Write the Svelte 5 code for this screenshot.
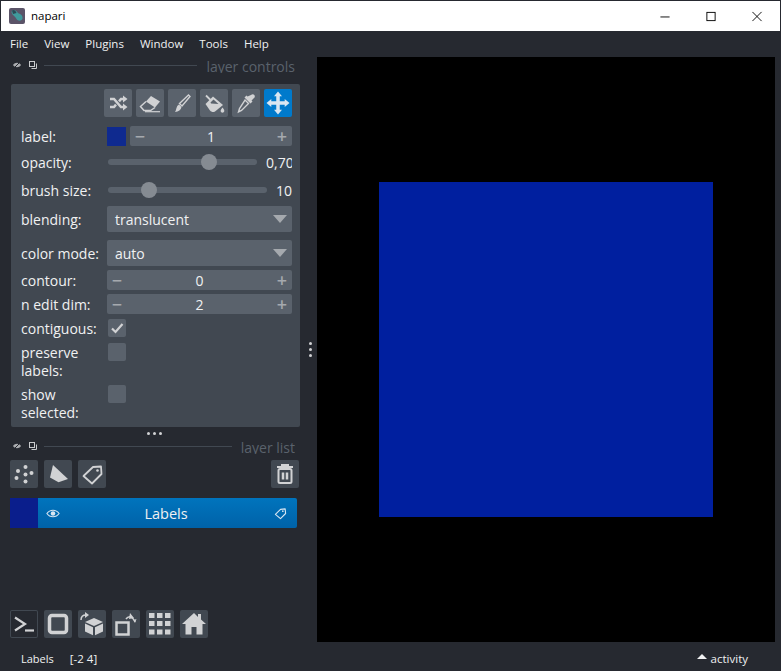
<script>
  const menus = ['File', 'View', 'Plugins', 'Window', 'Tools', 'Help'];
</script>

<div class="window">
  <header class="titlebar">
    <svg class="appicon" viewBox="0 0 16 16">
      <rect width="16" height="16" rx="2" fill="#5b5468" />
      <path d="M3 2.5 C5 1 8 3 9 5 C11 6 14 7 13.5 10.5 C13 13 9 13.5 7.5 11 C6.5 8.5 3 7 2.5 4.5Z" fill="#3f9a9c" />
      <path d="M3 2.5 C5 1 7 3 7.5 5 L4 6 Z" fill="#2a4a55" />
    </svg>
    <span class="title">napari</span>
    <div class="winbtns">
      <svg viewBox="0 0 12 12"><path d="M1 6.5h10" stroke="#000" stroke-width="1" /></svg>
      <svg viewBox="0 0 12 12"><rect x="1.5" y="1.5" width="9" height="9" fill="none" stroke="#000" /></svg>
      <svg viewBox="0 0 12 12"><path d="M1 1l10 10M11 1L1 11" stroke="#000" stroke-width="1" /></svg>
    </div>
  </header>

  <nav class="menubar">
    {#each menus as m}<span>{m}</span>{/each}
  </nav>

  <div class="main">
    <aside class="dock">
      <div class="dockhead controls">
        <svg class="mini" viewBox="0 0 8 8"><path d="M0 4c2-3 6-3 8 0-2 3-6 3-8 0z" fill="#a9abae" /><path d="M1 7L7 1" stroke="#262930" /></svg>
        <svg class="mini gap" viewBox="0 0 8 8"><rect x="0.5" y="0.5" width="5" height="5" fill="none" stroke="#c8cacc" /><path d="M2.5 7.5h5v-5" fill="none" stroke="#c8cacc" /></svg>
        <div class="rule"></div>
        <span class="docktitle">layer controls</span>
      </div>

      <section class="panel">
        <div class="tools">
          <button class="ib" aria-label="shuffle">
            <svg viewBox="0 0 28 28"><path d="M6 10h4l7 8h3M6 18h4l2-2.4M15 12.400l2-2.400h3" fill="none" stroke="#d1d2d4" stroke-width="2.500" /><path d="M19 6.500l4.500 3.500-4.500 3.500zM19 14.500l4.500 3.500-4.500 3.500z" fill="#d1d2d4" /></svg>
          </button>
          <button class="ib" aria-label="erase">
            <svg viewBox="0 0 28 28"><path d="M15 7L24 12.500l-5 6-9-6z" fill="#d1d2d4" /><path d="M10 12.500l-5.500 5 3.500 4h6.500l4.500-3" fill="none" stroke="#d1d2d4" stroke-width="1.500" /><path d="M9 22.700h15" stroke="#d1d2d4" stroke-width="1.200" /></svg>
          </button>
          <button class="ib" aria-label="paint">
            <svg viewBox="0 0 28 28"><path d="M20.500 6l1.500 1.500-8 9.500-2.500-2.500z" fill="none" stroke="#d1d2d4" stroke-width="1.400" /><path d="M11 15.500l2.500 2.500c-.5 3-3 4.500-6.500 5 1.500-1.500 1-6 4-7.500z" fill="#d1d2d4" /></svg>
          </button>
          <button class="ib" aria-label="fill">
            <svg viewBox="0 0 28 28"><path d="M6 6.500l7 7" stroke="#d1d2d4" stroke-width="1.800" /><path d="M5.500 15L13 7.500 23 16l-8 6.500c-2 1-3.500 .5-5-1z" fill="#d1d2d4" /><path d="M10.500 13.500l3-3 5 4.500-7.500-.5z" fill="#5a626c" /><path d="M22.500 18.500c1.500 2 2 3 1.800 3.800a1.900 1.900 0 0 1-3.700 0c-.1-.8.4-1.800 1.900-3.800z" fill="#d1d2d4" /></svg>
          </button>
          <button class="ib" aria-label="pick">
            <svg viewBox="0 0 28 28"><path d="M19 6c1-1 2.500-1 3.300-.1s.7 2.200-.3 3.200l-2.500 2.500 1 1-2 2-6-6 2-2 1 1z" fill="#d1d2d4" /><path d="M13 11l3.500 3.500-7 7-3 1.500 1-3.500z" fill="none" stroke="#d1d2d4" stroke-width="1.400" /></svg>
          </button>
          <button class="ib active" aria-label="move">
            <svg viewBox="0 0 28 28"><path d="M14 7v14M7 14h14" stroke="#d9e6f2" stroke-width="3.500" /><path d="M14 2.500l4 4.800h-8zM14 25.500l-4-4.800h8zM2.500 14l4.800-4v8zM25.500 14l-4.800 4v-8z" fill="#d9e6f2" /></svg>
          </button>
        </div>

        <div class="row r-label">
          <span class="lbl">label:</span>
          <div class="swatch"></div>
          <div class="spin narrow"><i>−</i><b>1</b><i>+</i></div>
        </div>
        <div class="row r-op">
          <span class="lbl">opacity:</span>
          <div class="slider w149"><div class="thumb t-op"></div></div>
          <span class="val clip">0,70</span>
        </div>
        <div class="row r-br">
          <span class="lbl">brush size:</span>
          <div class="slider w159"><div class="thumb t-br"></div></div>
          <span class="val">10</span>
        </div>
        <div class="row r-combo1">
          <span class="lbl">blending:</span>
          <div class="combo"><span>translucent</span><em></em></div>
        </div>
        <div class="row r-combo2">
          <span class="lbl">color mode:</span>
          <div class="combo"><span>auto</span><em></em></div>
        </div>
        <div class="row r-spin">
          <span class="lbl">contour:</span>
          <div class="spin"><i>−</i><b>0</b><i>+</i></div>
        </div>
        <div class="row r-spin">
          <span class="lbl">n edit dim:</span>
          <div class="spin"><i>−</i><b>2</b><i>+</i></div>
        </div>
        <div class="row r-c1">
          <span class="lbl">contiguous:</span>
          <div class="check"><svg viewBox="0 0 18 18"><path d="M4 9.500l3.500 3.500 7-8" fill="none" stroke="#d1d2d4" stroke-width="2.200" /></svg></div>
        </div>
        <div class="row r-c2">
          <span class="lbl two">preserve<br />labels:</span>
          <div class="check"></div>
        </div>
        <div class="row r-c3">
          <span class="lbl two">show<br />selected:</span>
          <div class="check"></div>
        </div>
      </section>

      <div class="hdots"><s></s><s></s><s></s></div>

      <div class="dockhead list">
        <svg class="mini" viewBox="0 0 8 8"><path d="M0 4c2-3 6-3 8 0-2 3-6 3-8 0z" fill="#a9abae" /><path d="M1 7L7 1" stroke="#262930" /></svg>
        <svg class="mini gap" viewBox="0 0 8 8"><rect x="0.5" y="0.500" width="5" height="5" fill="none" stroke="#c8cacc" /><path d="M2.500 7.500h5v-5" fill="none" stroke="#c8cacc" /></svg>
        <div class="rule"></div>
        <span class="docktitle">layer list</span>
      </div>

      <div class="listbtns">
        <button class="ib dark" aria-label="new points">
          <svg viewBox="0 0 28 28" fill="#d1d2d4"><circle cx="15.500" cy="7" r="2" /><circle cx="8" cy="11" r="2" /><circle cx="21.500" cy="13" r="2" /><circle cx="15.500" cy="14.500" r="2" /><circle cx="6.500" cy="18" r="2" /><circle cx="15.500" cy="21.500" r="2" /></svg>
        </button>
        <button class="ib dark" aria-label="new shapes">
          <svg viewBox="0 0 28 28"><path d="M9 5l15 14-9.500 3.300L6 17.600z" fill="#d1d2d4" /></svg>
        </button>
        <button class="ib dark" aria-label="new labels">
          <svg viewBox="0 0 28 28"><path d="M5.500 16l9.500-9 8-.5.500 7.500-9.500 9.500z" fill="none" stroke="#d1d2d4" stroke-width="1.800" stroke-linejoin="round" /><circle cx="19.500" cy="10.500" r="1.300" fill="#d1d2d4" /></svg>
        </button>
        <div class="spacer"></div>
        <button class="ib dark" aria-label="delete">
          <svg viewBox="0 0 28 28"><path d="M6 7h16M11 7V5h6v2" fill="none" stroke="#d1d2d4" stroke-width="2" /><rect x="7.500" y="9" width="13" height="14" rx="1.500" fill="none" stroke="#d1d2d4" stroke-width="2" /><path d="M12 12.500v7M16 12.500v7" stroke="#d1d2d4" stroke-width="2.500" /></svg>
        </button>
      </div>

      <div class="layer">
        <div class="thumbnail"></div>
        <svg class="eye" viewBox="0 0 16 12"><path d="M1 6c3.500-5 10.500-5 14 0-3.500 5-10.500 5-14 0z" fill="none" stroke="#d9e6f2" stroke-width="1.200" /><circle cx="8" cy="6" r="2.600" fill="#d9e6f2" /></svg>
        <span class="lname">Labels</span>
        <svg class="tag" viewBox="0 0 14 14"><path d="M1.500 8l5.500-5.500 5-.5.500 5-5.500 5.500z" fill="none" stroke="#d9e6f2" stroke-width="1.200" stroke-linejoin="round" /><circle cx="9.500" cy="4.500" r="0.900" fill="#d9e6f2" /></svg>
      </div>

      <div class="fill"></div>

      <div class="bottombtns">
        <button class="ib console" aria-label="console">
          <svg viewBox="0 0 28 28"><path d="M5 7.500l10 6.500-10 6.500" fill="none" stroke="#d1d2d4" stroke-width="2.200" /><path d="M15 20.500h9" stroke="#d1d2d4" stroke-width="2.200" /></svg>
        </button>
        <button class="ib dark" aria-label="ndisplay">
          <svg viewBox="0 0 28 28"><rect x="5.500" y="5.500" width="17" height="17" rx="2.500" fill="none" stroke="#d1d2d4" stroke-width="3.500" /></svg>
        </button>
        <button class="ib dark" aria-label="roll">
          <svg viewBox="0 0 28 28"><path d="M3 10c0-3 2-5 5-5" fill="none" stroke="#d1d2d4" stroke-width="1.500" /><path d="M11 5L7 2v6z" fill="#d1d2d4" /><path d="M16 8l9 4-9 4-9-4z" fill="#d1d2d4" /><path d="M7 13.500l8 3.800v8l-8-3.800zM25 13.500l-8 3.800v8l8-3.800z" fill="#d1d2d4" /></svg>
        </button>
        <button class="ib dark" aria-label="transpose">
          <svg viewBox="0 0 28 28"><rect x="4.500" y="12.500" width="12" height="12" fill="none" stroke="#d1d2d4" stroke-width="2.500" /><path d="M14 9c2-3 6-4 9 3" fill="none" stroke="#d1d2d4" stroke-width="1.500" /><path d="M18 3l-1 6 5-1zM23 13l1.500-4-3 1z" fill="#d1d2d4" /></svg>
        </button>
        <button class="ib dark" aria-label="grid">
          <svg viewBox="0 0 28 28" fill="#d1d2d4"><rect x="3" y="3" width="5.500" height="5" /><rect x="11" y="3" width="5.500" height="5" /><rect x="19" y="3" width="5.500" height="5" /><rect x="3" y="11" width="5.500" height="5" /><rect x="11" y="11" width="5.500" height="5" /><rect x="19" y="11" width="5.500" height="5" /><rect x="3" y="19.500" width="5.500" height="5" /><rect x="11" y="19.500" width="5.500" height="5" /><rect x="19" y="19.500" width="5.500" height="5" /></svg>
        </button>
        <button class="ib dark" aria-label="home">
          <svg viewBox="0 0 28 28"><path d="M14 3L2 14h3.500v10.500h6V17h5v7.500h6V14H26l-5-4.500V4h-3v3z" fill="#d1d2d4" /></svg>
        </button>
      </div>
    </aside>

    <div class="splitter"><s></s><s></s><s></s></div>

    <main class="canvas"><div class="square"></div></main>
  </div>

  <footer class="status">
    <span class="layername">Labels</span>
    <span class="coords">[-2 4]</span>
    <span class="activity"><em></em>activity</span>
  </footer>
</div>

<style>
  :global(body) {
    margin: 0;
    background: #262930;
  }
  .window {
    box-sizing: border-box;
    width: 781px;
    height: 671px;
    border: 1px solid #262930;
    border-bottom: 0;
    display: flex;
    flex-direction: column;
    background: #262930;
    color: #f0f1f2;
    font-family: "Open Sans", "Noto Sans", sans-serif;
    font-size: 14px;
    overflow: hidden;
  }
  .titlebar {
    height: 30px;
    background: #fff;
    color: #000;
    display: flex;
    align-items: center;
    padding-left: 8px;
    flex: none;
  }
  .appicon {
    width: 16px;
    height: 16px;
  }
  .title {
    margin-left: 6px;
    font-size: 11.5px;
    margin-top: -1px;
  }
  .winbtns {
    margin-left: auto;
    display: flex;
    margin-right: 0;
  }
  .winbtns svg {
    width: 11px;
    height: 11px;
    padding: 0 17.500px;
    display: block;
  }
  .menubar {
    height: 26px;
    flex: none;
    display: flex;
    align-items: center;
    gap: 16px;
    padding-left: 9px;
    font-size: 11.5px;
    padding-bottom: 1px;
    box-sizing: border-box;
  }
  .main {
    flex: 1;
    display: flex;
    min-height: 0;
  }
  .dock {
    width: 304px;
    flex: none;
    display: flex;
    flex-direction: column;
  }
  .dockhead {
    display: flex;
    align-items: center;
    padding-left: 12px;
    padding-right: 10px;
    box-sizing: border-box;
    flex: none;
  }
  .dockhead.controls {
    height: 27px;
    padding-bottom: 8px;
  }
  .dockhead.list {
    height: 21px;
    padding-bottom: 4px;
  }
  .mini {
    width: 8px;
    height: 8px;
    flex: none;
    margin-top: -3px;
  }
  .mini.gap {
    margin-left: 8px;
  }
  .rule {
    flex: 1;
    height: 1px;
    background: #414851;
    margin: -3px 9px 0 7px;
  }
  .docktitle {
    color: #5a626c;
    font-size: 14px;
    line-height: 14px;
    height: 13px;
    overflow: hidden;
  }
  .panel {
    margin-left: 10px;
    width: 289px;
    height: 343px;
    box-sizing: border-box;
    background: #414851;
    border-radius: 2px;
    padding: 5px 8px 0 10px;
    flex: none;
  }
  .tools {
    display: flex;
    justify-content: flex-end;
    gap: 4px;
  }
  .ib {
    width: 28px;
    height: 28px;
    padding: 0;
    border: 0;
    border-radius: 2px;
    background: #5a626c;
    flex: none;
    display: block;
  }
  .ib svg {
    display: block;
    width: 28px;
    height: 28px;
  }
  .ib.active {
    background: #007acc;
  }
  .ib.dark {
    background: #414851;
  }
  .ib.console {
    background: #262930;
    box-shadow: inset 0 0 0 1px #414851;
  }
  .row {
    display: flex;
    align-items: center;
  }
  .lbl {
    width: 86px;
    flex: none;
    font-size: 14px;
    line-height: 18px;
    white-space: nowrap;
    padding-top: 2px;
  }
  .two {
    align-self: flex-start;
    padding-top: 1px;
  }
  .r-label {
    height: 20px;
    margin-top: 9px;
  }
  .swatch {
    width: 19px;
    height: 19px;
    background: #0f2a8f;
    flex: none;
  }
  .spin {
    flex: 1;
    height: 20px;
    background: #5a626c;
    border-radius: 2px;
    display: flex;
    align-items: center;
    justify-content: space-between;
    padding: 0 3px;
    box-sizing: border-box;
    font-size: 14px;
  }
  .spin.narrow {
    margin-left: 4px;
  }
  .spin i {
    font-style: normal;
    font-weight: 600;
    color: #a5a9ae;
    font-size: 18px;
    width: 14px;
    text-align: center;
    line-height: 20px;
  }
  .spin b {
    font-weight: 400;
  }
  .r-op {
    height: 20px;
    margin-top: 6px;
  }
  .r-br {
    height: 20px;
    margin-top: 8px;
  }
  .slider {
    position: relative;
    height: 6px;
    background: #5a626c;
    border-radius: 3px;
    margin-left: 1px;
    flex: none;
  }
  .w149 {
    width: 149px;
  }
  .w159 {
    width: 159px;
  }
  .thumb {
    position: absolute;
    top: -5px;
    width: 16px;
    height: 16px;
    border-radius: 50%;
    background: #858b92;
  }
  .t-op {
    left: 93px;
  }
  .t-br {
    left: 33px;
  }
  .val {
    margin-left: auto;
    font-size: 14px;
  }
  .clip {
    width: 26px;
    overflow: hidden;
    white-space: nowrap;
  }
  .r-combo1 {
    height: 26px;
    margin-top: 6px;
  }
  .r-combo2 {
    height: 26px;
    margin-top: 8px;
  }
  .combo {
    flex: 1;
    height: 26px;
    background: #5a626c;
    border-radius: 2px;
    display: flex;
    align-items: center;
    justify-content: space-between;
    padding: 0 5px 0 8px;
    box-sizing: border-box;
  }
  .combo em {
    width: 0;
    height: 0;
    border-left: 7px solid transparent;
    border-right: 7px solid transparent;
    border-top: 8px solid #a5a9ae;
  }
  .r-spin {
    height: 20px;
    margin-top: 4px;
  }
  .check {
    width: 18px;
    height: 18px;
    background: #5a626c;
    border-radius: 2px;
    margin-left: 1px;
    flex: none;
  }
  .check svg {
    display: block;
  }
  .r-c1 {
    height: 18px;
    margin-top: 5px;
  }
  .r-c2,
  .r-c3 {
    align-items: flex-start;
  }
  .r-c2 {
    margin-top: 6px;
  }
  .r-c3 {
    margin-top: 5px;
  }
  .hdots {
    height: 12px;
    flex: none;
    display: flex;
    justify-content: center;
    align-items: center;
    gap: 3px;
    width: 306px;
  }
  .hdots s,
  .splitter s {
    display: block;
    width: 3px;
    height: 3px;
    border-radius: 50%;
    background: #d1d2d4;
  }
  .listbtns {
    display: flex;
    gap: 6px;
    padding-left: 9px;
    padding-right: 6px;
    flex: none;
  }
  .spacer {
    flex: 1;
  }
  .layer {
    display: flex;
    align-items: center;
    margin: 10px 8px 0 9px;
    height: 30px;
    flex: none;
    border-radius: 2px;
    background: linear-gradient(#0074bd, #0062a8);
  }
  .thumbnail {
    width: 28px;
    height: 30px;
    background: #0a1e8c;
    flex: none;
  }
  .eye {
    width: 14px;
    height: 11px;
    margin-left: 8px;
    flex: none;
  }
  .lname {
    flex: 1;
    text-align: center;
    font-size: 14.5px;
    padding-right: 2px;
    padding-top: 1px;
  }
  .tag {
    width: 13px;
    height: 13px;
    margin-right: 10px;
    flex: none;
  }
  .fill {
    flex: 1;
  }
  .bottombtns {
    display: flex;
    gap: 6px;
    padding-left: 9px;
    padding-bottom: 4px;
    flex: none;
  }
  .splitter {
    width: 10px;
    margin-right: 2px;
    flex: none;
    display: flex;
    flex-direction: column;
    align-items: center;
    justify-content: center;
    gap: 3px;
  }
  .canvas {
    width: 458px;
    flex: none;
    background: #000;
    display: flex;
    align-items: center;
    justify-content: center;
  }
  .square {
    width: 334px;
    height: 335px;
    background: #001f9f;
  }
  .status {
    height: 29px;
    flex: none;
    display: flex;
    align-items: center;
    font-size: 11px;
    padding-left: 20px;
    padding-right: 32px;
    padding-top: 3px;
    box-sizing: border-box;
  }
  .coords {
    margin-left: 16px;
    font-size: 11.5px;
  }
  .activity {
    margin-left: auto;
    display: flex;
    align-items: center;
    gap: 4px;
    font-size: 11.5px;
  }
  .activity em {
    width: 0;
    height: 0;
    border-left: 5px solid transparent;
    border-right: 5px solid transparent;
    border-bottom: 5px solid #f0f1f2;
    margin-top: -3px;
  }
</style>
